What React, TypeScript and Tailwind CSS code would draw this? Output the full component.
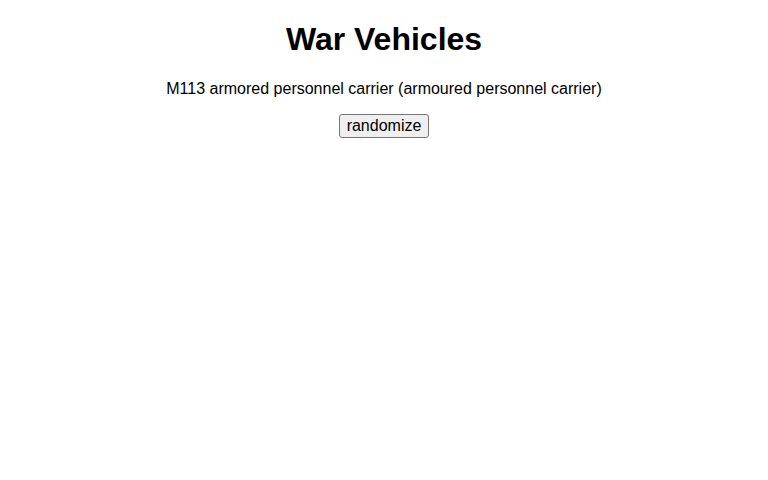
import { useState } from "react";

const vehicles = [
  "M113 armored personnel carrier (armoured personnel carrier)",
  "M1 Abrams main battle tank",
  "BMP-2 infantry fighting vehicle",
  "Humvee (HMMWV) light utility vehicle",
];

export default function App() {
  const [idx, setIdx] = useState(0);

  return (
    <div className="min-h-screen bg-white text-black font-['Liberation_Sans',Arial,sans-serif] text-center">
      {/* 제목 */}
      <h1 className="pt-[21px] pb-[22px] text-[32px] leading-[37px] font-bold">War Vehicles</h1>
      {/* 차량 이름 */}
      <p className="text-base leading-[18px]">{vehicles[idx]}</p>
      {/* 버튼 */}
      <button
        onClick={() => setIdx((idx + 1) % vehicles.length)}
        className="mt-[16px] px-[7px] py-[2px] text-base leading-[18px] bg-[#efefef] border border-[#767676] rounded-[3px] text-black"
      >
        randomize
      </button>
    </div>
  );
}
